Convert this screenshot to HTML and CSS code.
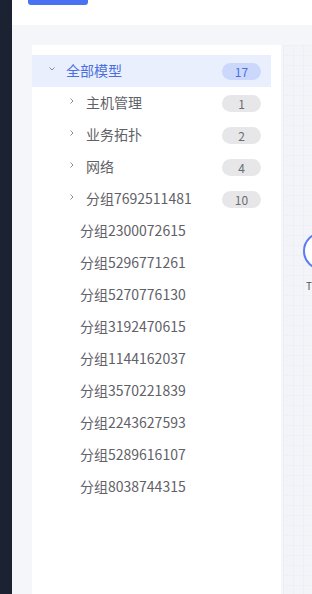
FILE: index.html
```html
<!DOCTYPE html>
<html lang="zh-CN">
<head>
    <meta charset="utf-8">
    <title>模型管理</title>
    <link rel="stylesheet" href="styles.css">
</head>
<body>
<div class="side"></div>
<div class="main">
    <div class="topbar">
        <span class="btn-primary"></span>
    </div>
    <div class="content">
        <!-- 左侧模型树 -->
        <div class="panel">
            <ul class="tree">
                <li class="node active lv0">
                    <svg class="caret down" width="20" height="32" viewBox="0 0 20 32"><path d="M7.5 12.5 L10 15 L12.5 12.5" fill="none" stroke="#8a8d96" stroke-width="1"/></svg>
                    <span class="label">全部模型</span>
                    <span class="count">17</span>
                </li>
                <li class="node lv1">
                    <svg class="caret" width="20" height="32" viewBox="0 0 20 32"><path d="M8.5 11.5 L11 14 L8.5 16.5" fill="none" stroke="#8a8d96" stroke-width="1"/></svg>
                    <span class="label">主机管理</span>
                    <span class="count">1</span>
                </li>
                <li class="node lv1">
                    <svg class="caret" width="20" height="32" viewBox="0 0 20 32"><path d="M8.5 11.5 L11 14 L8.5 16.5" fill="none" stroke="#8a8d96" stroke-width="1"/></svg>
                    <span class="label">业务拓扑</span>
                    <span class="count">2</span>
                </li>
                <li class="node lv1">
                    <svg class="caret" width="20" height="32" viewBox="0 0 20 32"><path d="M8.5 11.5 L11 14 L8.5 16.5" fill="none" stroke="#8a8d96" stroke-width="1"/></svg>
                    <span class="label">网络</span>
                    <span class="count">4</span>
                </li>
                <li class="node lv1">
                    <svg class="caret" width="20" height="32" viewBox="0 0 20 32"><path d="M8.5 11.5 L11 14 L8.5 16.5" fill="none" stroke="#8a8d96" stroke-width="1"/></svg>
                    <span class="label">分组7692511481</span>
                    <span class="count">10</span>
                </li>
                <li class="node leaf"><span class="label">分组2300072615</span></li>
                <li class="node leaf"><span class="label">分组5296771261</span></li>
                <li class="node leaf"><span class="label">分组5270776130</span></li>
                <li class="node leaf"><span class="label">分组3192470615</span></li>
                <li class="node leaf"><span class="label">分组1144162037</span></li>
                <li class="node leaf"><span class="label">分组3570221839</span></li>
                <li class="node leaf"><span class="label">分组2243627593</span></li>
                <li class="node leaf"><span class="label">分组5289616107</span></li>
                <li class="node leaf"><span class="label">分组8038744315</span></li>
            </ul>
        </div>
        <!-- 右侧拓扑画布 -->
        <div class="canvas">
            <div class="topo-node">
                <span class="circle"></span>
                <span class="topo-label">T</span>
            </div>
        </div>
    </div>
</div>
</body>
</html>
```
FILE: styles.css
```css
*
{
    margin: 0;
    padding: 0;
    box-sizing: border-box;
}

html,
body
{
    height: 100%;
}

body
{
    display: flex;
    font-family: "Noto Sans CJK SC", "Noto Sans", sans-serif;
    font-size: 14px;
    color: #5f6167;
    background-color: #f5f6f9;
    overflow: hidden;
}

/* 左侧深色导航 */
.side
{
    width: 12px;
    flex-shrink: 0;
    background-color: #1b2232;
}

.main
{
    flex: 1;
    display: flex;
    flex-direction: column;
    min-width: 0;
}

/* 顶部操作栏 */
.topbar
{
    height: 25px;
    flex-shrink: 0;
    background-color: #ffffff;
    padding-left: 16px;
}

.btn-primary
{
    display: block;
    width: 60px;
    height: 5px;
    background-color: #4a73f3;
    border-radius: 0 0 3px 3px;
}

.content
{
    flex: 1;
    display: flex;
    gap: 2px;
    padding: 20px 0 0 20px;
    min-height: 0;
}

.panel
{
    width: 249px;
    flex-shrink: 0;
    background-color: #ffffff;
    padding: 10px 10px 0 0;
}

.tree
{
    list-style: none;
}

.node
{
    display: flex;
    align-items: center;
    height: 32px;
    padding-right: 10px;
    white-space: nowrap;
}

.node .caret
{
    flex-shrink: 0;
    display: block;
}

.node .label
{
    flex: 1;
    line-height: 20px;
    margin-top: -2px;
}

.lv0
{
    padding-left: 10px;
}

.lv0 .caret
{
    margin-right: 4px;
}

.lv1
{
    padding-left: 30px;
}

.lv1 .caret
{
    margin-right: 4px;
}

.leaf
{
    padding-left: 48px;
}

.node.active
{
    background-color: #e9effd;
}

.node.active .label
{
    color: #4b6fe0;
}

.count
{
    width: 39px;
    height: 17px;
    line-height: 17px;
    border-radius: 9px;
    background-color: #e7e7e9;
    color: #6b6d72;
    font-size: 12px;
    text-align: center;
}

.node.active .count
{
    background-color: #cbd8fb;
    color: #4b6fe0;
}

/* 拓扑画布 */
.canvas
{
    flex: 1;
    position: relative;
    overflow: hidden;
    background-color: #f3f4f8;
    background-image:
        linear-gradient(rgba(225, 228, 236, 0.25) 1px, transparent 1px),
        linear-gradient(90deg, rgba(225, 228, 236, 0.25) 1px, transparent 1px);
    background-size: 10px 10px;
}

.topo-node
{
    position: absolute;
    left: 20px;
    top: 187px;
    display: flex;
    flex-direction: column;
    align-items: center;
    width: 38px;
}

.circle
{
    width: 38px;
    height: 38px;
    border: 2px solid #5a7ef2;
    border-radius: 50%;
    background-color: #ffffff;
}

.topo-label
{
    margin-top: 10px;
    margin-left: -26px;
    font-size: 10px;
    line-height: 12px;
    color: #555;
}
```
